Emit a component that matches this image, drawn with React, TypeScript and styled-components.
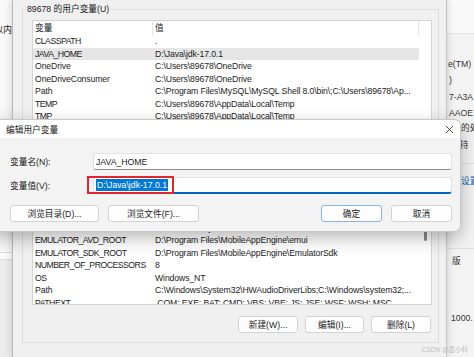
import React from "react";
import styled, { createGlobalStyle } from "styled-components";

const GlobalStyle = createGlobalStyle`
  html, body {
    margin: 0;
    padding: 0;
  }
  body {
    width: 474px;
    height: 357px;
    overflow: hidden;
    background: #eeeeee;
    font-family: "Liberation Sans", "Noto Sans CJK SC", sans-serif;
    font-size: 8.7px;
    color: #1b1b1b;
  }
`;

const Desktop = styled.div`
  position: relative;
  width: 474px;
  height: 357px;
  overflow: hidden;
  background: #eeeeee;
`;

/* ---------- window behind, on the left ---------- */

const LeftWindow = styled.div`
  position: absolute;
  left: -200px;
  top: 0;
  width: 212px;
  height: 357px;
  display: flex;
  flex-direction: column;
  background: #f9f9f9;
  z-index: 1;
`;

const LeftText = styled.div`
  margin-top: 24px;
  line-height: 12px;
  text-align: right;
  white-space: nowrap;
`;

const LeftBand = styled.div`
  margin-top: 216px;
  height: 6px;
  border-top: 1px solid #dcdcdc;
  border-bottom: 1px solid #dcdcdc;
  background: #fbfbfb;
`;

const LeftFill = styled.div`
  flex: 1;
  background: #ececec;
`;

/* ---------- window behind, on the right ---------- */

const RightWindow = styled.div`
  position: absolute;
  left: 440px;
  top: 0;
  width: 60px;
  height: 357px;
  display: flex;
  flex-direction: column;
  background: #f3f3f3;
  z-index: 1;
`;

const RightHead = styled.div`
  height: 33px;
  background: #f9f9f9;
  border-bottom: 1px solid #e3e3e3;
`;

const InfoLine = styled.div<{ $gap: number; $indent?: number; $link?: boolean }>`
  margin-top: ${(p) => p.$gap}px;
  padding-left: ${(p) => p.$indent ?? 9}px;
  line-height: 12px;
  height: 12px;
  white-space: nowrap;
  color: ${(p) => (p.$link ? "#0a5fb4" : "#333")};
`;

const InfoRule = styled.div<{ $gap: number }>`
  margin-top: ${(p) => p.$gap}px;
  height: 1px;
  background: #e2e2e2;
`;

/* ---------- environment variables window ---------- */

const EnvWindow = styled.div`
  position: absolute;
  left: 12px;
  top: 0;
  width: 435px;
  height: 357px;
  box-sizing: border-box;
  padding: 0 7px 0 9px;
  background: #f0f0f0;
  border-left: 1px solid #b9b9b9;
  border-right: 1px solid #c4c4c4;
  box-shadow: 0 0 8px rgba(0, 0, 0, 0.18);
  z-index: 2;
`;

const Group = styled.fieldset<{ $gap: number }>`
  margin: ${(p) => p.$gap}px 0 0 0;
  padding: 4px 6px 0 9px;
  border: 1px solid #dcdcdc;
  min-inline-size: 0;
`;

const Legend = styled.legend`
  margin-left: -7px;
  padding: 0 2px;
  line-height: 14px;
  height: 14px;
`;

const ListBox = styled.div<{ $height: number }>`
  height: ${(p) => p.$height}px;
  box-sizing: border-box;
  display: flex;
  border: 1px solid #d4d4d4;
  background: #ffffff;
  overflow: hidden;
`;

const ListBody = styled.div`
  width: 386px;
  display: flex;
  flex-direction: column;
`;

const HeaderRow = styled.div`
  display: grid;
  grid-template-columns: 120px 1fr;
  height: 14px;
  flex-shrink: 0;
  line-height: 14px;
  border-right: 1px solid #e5e5e5;
`;

const HeaderCell = styled.div`
  padding-left: 2px;
  border-right: 1px solid #e5e5e5;
  &:last-child {
    border-right: none;
  }
`;

const Row = styled.div<{ $selected?: boolean }>`
  display: grid;
  grid-template-columns: 120px 1fr;
  height: 12.5px;
  flex-shrink: 0;
  line-height: 12.5px;
  background: ${(p) => (p.$selected ? "#e6e6e6" : "transparent")};
`;

const Cell = styled.div<{ $caps?: boolean }>`
  padding-left: 2px;
  white-space: nowrap;
  overflow: hidden;
  letter-spacing: ${(p) => (p.$caps ? "-0.5px" : "-0.12px")};
`;

const ScrollTrack = styled.div`
  flex: 1;
  display: flex;
  justify-content: center;
`;

const ScrollThumb = styled.div`
  margin-top: 16px;
  width: 3px;
  height: 30px;
  border-radius: 2px;
  background: #8a8a8a;
`;

const ButtonRow = styled.div<{ $gap: number }>`
  display: flex;
  justify-content: flex-end;
  gap: 7px;
  margin-top: ${(p) => p.$gap}px;
  padding-right: 1px;
  padding-bottom: 9px;
`;

const Button = styled.button<{ $width: number; $primary?: boolean }>`
  width: ${(p) => p.$width}px;
  height: 17px;
  box-sizing: border-box;
  padding: 0;
  font-family: inherit;
  font-size: 8.7px;
  color: #1b1b1b;
  background: #fdfdfd;
  border: 1px solid ${(p) => (p.$primary ? "#8bb4de" : "#d3d3d3")};
  border-radius: 3px;
  white-space: nowrap;
`;

/* ---------- edit dialog ---------- */

const Dialog = styled.div`
  position: absolute;
  left: -12px;
  top: 119px;
  width: 473px;
  height: 113px;
  display: flex;
  flex-direction: column;
  background: #f3f3f3;
  border: 1px solid #c8c8c8;
  border-radius: 7px;
  box-sizing: border-box;
  overflow: hidden;
  box-shadow: 0 6px 18px rgba(0, 0, 0, 0.28);
  z-index: 3;
`;

const TitleBar = styled.div`
  height: 18px;
  flex-shrink: 0;
  display: flex;
  align-items: center;
  justify-content: space-between;
  padding: 0 6px 0 17px;
  background: #ffffff;
`;

const DialogBody = styled.div`
  display: flex;
  flex-direction: column;
  padding: 15px 8px 0 21px;
`;

const FieldRow = styled.div<{ $gap: number }>`
  display: grid;
  grid-template-columns: 83px 359px;
  align-items: center;
  margin-top: ${(p) => p.$gap}px;
`;

const Input = styled.div<{ $focused?: boolean }>`
  position: relative;
  height: 17px;
  box-sizing: border-box;
  display: flex;
  align-items: center;
  padding-left: 2px;
  background: #ffffff;
  border: 1px solid #e2e2e2;
  border-bottom: ${(p) => (p.$focused ? "2px solid #0067c0" : "1px solid #8d8d8d")};
  border-radius: 3px;
  white-space: nowrap;
`;

const Selected = styled.span`
  padding: 0 1px;
  line-height: 12px;
  background: #0078d7;
  color: #ffffff;
`;

const Callout = styled.div`
  position: absolute;
  left: -7px;
  top: -2px;
  width: 87px;
  height: 18px;
  box-sizing: border-box;
  border: 2px solid #e3262c;
`;

const DialogButtons = styled.div`
  display: flex;
  align-items: center;
  gap: 9px;
  margin-top: 11px;
`;

const Spacer = styled.div`
  flex: 1;
`;

const Watermark = styled.div`
  position: absolute;
  right: 6px;
  bottom: 3px;
  font-size: 6.5px;
  color: #bdbdbd;
  z-index: 4;
`;

const userVars = [
  ["CLASSPATH", "."],
  ["JAVA_HOME", "D:\\Java\\jdk-17.0.1"],
  ["OneDrive", "C:\\Users\\89678\\OneDrive"],
  ["OneDriveConsumer", "C:\\Users\\89678\\OneDrive"],
  ["Path", "C:\\Program Files\\MySQL\\MySQL Shell 8.0\\bin\\;C:\\Users\\89678\\Ap..."],
  ["TEMP", "C:\\Users\\89678\\AppData\\Local\\Temp"],
  ["TMP", "C:\\Users\\89678\\AppData\\Local\\Temp"],
];

const sysVars = [
  ["ComSpec", "C:\\Windows\\system32\\cmd.exe"],
  ["DriverData", "C:\\Windows\\System32\\Drivers\\DriverData"],
  ["EMULATOR_AVD_ROOT", "D:\\Program Files\\MobileAppEngine\\emui"],
  ["EMULATOR_SDK_ROOT", "D:\\Program Files\\MobileAppEngine\\EmulatorSdk"],
  ["NUMBER_OF_PROCESSORS", "8"],
  ["OS", "Windows_NT"],
  ["Path", "C:\\Windows\\System32\\HWAudioDriverLibs;C:\\Windows\\system32;..."],
  ["PATHEXT", ".COM;.EXE;.BAT;.CMD;.VBS;.VBE;.JS;.JSE;.WSF;.WSH;.MSC"],
];

const isCaps = (s: string) => s === s.toUpperCase();

const CloseIcon = () => (
  <svg width="9" height="9" viewBox="0 0 9 9">
    <path d="M1 1 L8 8 M8 1 L1 8" stroke="#333" strokeWidth="0.9" fill="none" />
  </svg>
);

const VarRows = ({ rows, selected }: { rows: string[][]; selected?: string }) => (
  <>
    {rows.map(([k, v]) => (
      <Row key={k} $selected={k === selected}>
        <Cell $caps={isCaps(k)}>{k}</Cell>
        <Cell>{v}</Cell>
      </Row>
    ))}
  </>
);

export default function App() {
  return (
    <>
      <GlobalStyle />
      <Desktop>
        <LeftWindow>
          <LeftText>的大小限制在以内</LeftText>
          <LeftBand />
          <LeftFill />
        </LeftWindow>

        <RightWindow>
          <RightHead />
          <InfoLine $gap={24} $indent={8}>e(TM)</InfoLine>
          <InfoLine $gap={4}>)</InfoLine>
          <InfoLine $gap={5}>7-A3A</InfoLine>
          <InfoLine $gap={4}>AAOE</InfoLine>
          <InfoLine $gap={3} $indent={21}>的处</InfoLine>
          <InfoLine $gap={5} $indent={11}>支持</InfoLine>
          <InfoRule $gap={12} />
          <InfoLine $gap={11} $indent={21} $link>设置</InfoLine>
          <InfoRule $gap={61} />
          <InfoLine $gap={6} $indent={12}>版</InfoLine>
          <InfoLine $gap={45} $indent={11}>1000.</InfoLine>
        </RightWindow>

        <EnvWindow>
          <Group $gap={2}>
            <Legend>89678 的用户变量(U)</Legend>
            <ListBox $height={122}>
              <ListBody>
                <HeaderRow>
                  <HeaderCell>变量</HeaderCell>
                  <HeaderCell>值</HeaderCell>
                </HeaderRow>
                <VarRows rows={userVars} selected="JAVA_HOME" />
              </ListBody>
              <ScrollTrack />
            </ListBox>
            <ButtonRow $gap={7}>
              <Button $width={60}>新建(N)...</Button>
              <Button $width={60}>编辑(E)...</Button>
              <Button $width={60}>删除(D)</Button>
            </ButtonRow>
          </Group>

          <Group $gap={0}>
            <Legend>系统变量(S)</Legend>
            <ListBox $height={111}>
              <ListBody>
                <HeaderRow>
                  <HeaderCell>变量</HeaderCell>
                  <HeaderCell>值</HeaderCell>
                </HeaderRow>
                <VarRows rows={sysVars} />
              </ListBody>
              <ScrollTrack>
                <ScrollThumb />
              </ScrollTrack>
            </ListBox>
            <ButtonRow $gap={11}>
              <Button $width={60}>新建(W)...</Button>
              <Button $width={59}>编辑(I)...</Button>
              <Button $width={60}>删除(L)</Button>
            </ButtonRow>
          </Group>
        </EnvWindow>

        <Dialog>
          <TitleBar>
            <span>编辑用户变量</span>
            <CloseIcon />
          </TitleBar>
          <DialogBody>
            <FieldRow $gap={0}>
              <span>变量名(N):</span>
              <Input>JAVA_HOME</Input>
            </FieldRow>
            <FieldRow $gap={7}>
              <span>变量值(V):</span>
              <Input $focused>
                <Selected>D:\Java\jdk-17.0.1</Selected>
                <Callout />
              </Input>
            </FieldRow>
            <DialogButtons>
              <Button $width={89}>浏览目录(D)...</Button>
              <Button $width={91}>浏览文件(F)...</Button>
              <Spacer />
              <Button $width={61} $primary>确定</Button>
              <Button $width={61}>取消</Button>
            </DialogButtons>
          </DialogBody>
        </Dialog>

        <Watermark>CSDN @墨小科</Watermark>
      </Desktop>
    </>
  );
}
